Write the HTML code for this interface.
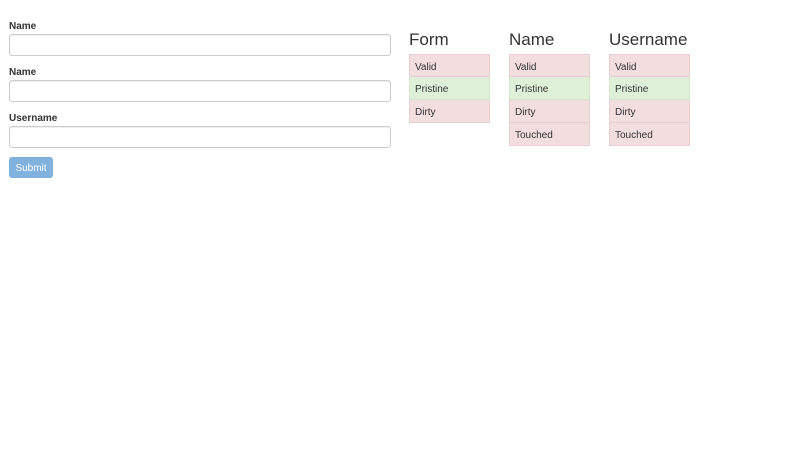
<!DOCTYPE html>
<html><head><style>
body{margin:0;background:#fff;font-family:"Liberation Sans",sans-serif;color:#333;}
.lbl{position:absolute;left:9px;font-size:10px;font-weight:bold;}
.inp{position:absolute;left:9px;width:380px;height:20px;border:1px solid #ccc;border-radius:3px;box-shadow:inset 0 1px 1px rgba(0,0,0,.075);}
.btn{position:absolute;left:9px;top:157px;width:44px;height:21px;background:#80b2dd;border-radius:3px;color:#fff;font-size:10px;text-align:center;line-height:23px;}
.col{position:absolute;top:30px;}
.col h3{margin:0;font-weight:normal;font-size:17px;height:24px;line-height:20px;}
.row{height:23px;line-height:22px;padding-top:2px;font-size:10px;padding-left:5px;box-sizing:border-box;width:81px;border:1px solid #e8cfcf;border-top:none;background:#f2dede;}
.row.first{border-top:1px solid #e8cfcf;line-height:21px;}
.g{background:#dff0d8;border-color:#d3e6cb;}
</style></head><body>
<div class="lbl" style="top:21px">Name</div>
<div class="inp" style="top:34px"></div>
<div class="lbl" style="top:67px">Name</div>
<div class="inp" style="top:80px"></div>
<div class="lbl" style="top:113px">Username</div>
<div class="inp" style="top:126px"></div>
<div class="btn">Submit</div>
<div class="col" style="left:409px"><h3>Form</h3>
<div class="row first">Valid</div><div class="row g">Pristine</div><div class="row">Dirty</div></div>
<div class="col" style="left:509px"><h3>Name</h3>
<div class="row first">Valid</div><div class="row g">Pristine</div><div class="row">Dirty</div><div class="row">Touched</div></div>
<div class="col" style="left:609px"><h3>Username</h3>
<div class="row first">Valid</div><div class="row g">Pristine</div><div class="row">Dirty</div><div class="row">Touched</div></div>
</body></html>
